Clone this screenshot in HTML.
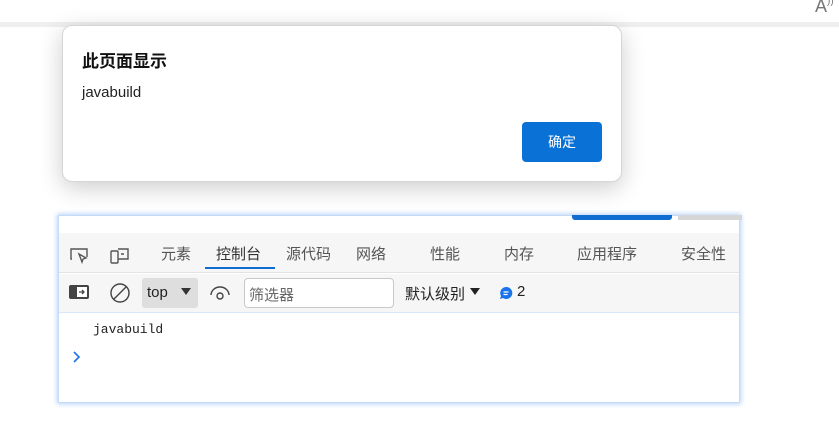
<!DOCTYPE html>
<html><head><meta charset="utf-8"><style>
*{margin:0;padding:0;box-sizing:border-box}
body{width:839px;height:440px;overflow:hidden;background:#fff;position:relative;font-family:"Liberation Sans","Noto Sans CJK SC",sans-serif}
.abs{position:absolute}
.tab{position:absolute;top:243px;font-size:15px;color:#555}
</style></head><body>
<div class="abs" style="left:0;top:22px;width:839px;height:5px;background:#efefef"></div>
<div class="abs" style="left:815px;top:-4px;font-size:18px;color:#777">A<span style="font-size:10px;vertical-align:top">))</span></div>

<!-- devtools -->
<div class="abs" style="left:58px;top:215px;width:682px;height:188px;background:#fff;box-shadow:0 0 5px 1px #b5d0f7;border:1px solid #c3daf8">
 <div class="abs" style="left:513px;top:-1px;width:100px;height:5px;background:#0f6cd0;border-radius:0 0 3px 3px"></div>
 <div class="abs" style="left:619px;top:-1px;width:64px;height:5px;background:#d6d6d6"></div>
 <div class="abs" style="left:0;top:17px;width:680px;height:40px;background:#f6f6f6;border-bottom:1px solid #e3e3e3"></div>
 <div class="abs" style="left:146px;top:51px;width:70px;height:2px;background:#0f6cd0"></div>
 <div class="abs" style="left:0;top:58px;width:680px;height:39px;background:#f6f6f6;border-bottom:1px solid #d8e6f8"></div>
 <div class="abs" style="left:83px;top:62px;width:56px;height:30px;background:#dedede;border-radius:3px"></div>
 <div class="abs" style="left:185px;top:62px;width:150px;height:30px;background:#fff;border:1px solid #c8c8c8;border-radius:4px"></div>
</div>
<!-- tab icons -->
<svg class="abs" style="left:68px;top:244px" width="24" height="22" fill="none" stroke="#555" stroke-width="1.4"><path d="M4 15H3V5h16v8"/><path d="M11 10l7 4-3 1-1 3z" fill="#fff"/></svg>
<svg class="abs" style="left:108px;top:244px" width="24" height="22" fill="none" stroke="#555" stroke-width="1.4"><rect x="3" y="7" width="7" height="12" rx="1"/><path d="M10 5h10v10h-10M13 10h3"/></svg>
<div class="tab" style="left:161px">元素</div>
<div class="tab" style="left:216px;color:#333">控制台</div>
<div class="tab" style="left:286px">源代码</div>
<div class="tab" style="left:356px">网络</div>
<div class="tab" style="left:430px">性能</div>
<div class="tab" style="left:504px">内存</div>
<div class="tab" style="left:577px">应用程序</div>
<div class="tab" style="left:681px">安全性</div>
<!-- toolbar -->
<svg class="abs" style="left:68px;top:283px" width="24" height="18"><rect x="1" y="2" width="20" height="14" rx="2" fill="#444"/><rect x="9" y="4" width="10" height="10" fill="#fff"/><path d="M11 9h5M14 7l2 2-2 2" stroke="#444" fill="none" stroke-width="1.3"/></svg>
<svg class="abs" style="left:108px;top:281px" width="24" height="24" fill="none" stroke="#444" stroke-width="1.4"><circle cx="12" cy="12" r="9"/><path d="M6 18L18 6"/></svg>
<div class="abs" style="left:147px;top:284px;font-size:15px;color:#222">top</div>
<div class="abs" style="left:181px;top:288px;width:0;height:0;border-left:5px solid transparent;border-right:5px solid transparent;border-top:7px solid #333"></div>
<svg class="abs" style="left:208px;top:283px" width="24" height="20" fill="none" stroke="#444" stroke-width="1.4"><path d="M3 12a9 8 0 0 1 18 0"/><circle cx="12" cy="13" r="3"/></svg>
<div class="abs" style="left:249px;top:284px;font-size:15px;color:#666">筛选器</div>
<div class="abs" style="left:405px;top:283px;font-size:15px;color:#222">默认级别</div>
<div class="abs" style="left:470px;top:288px;width:0;height:0;border-left:5px solid transparent;border-right:5px solid transparent;border-top:7px solid #222"></div>
<svg class="abs" style="left:499px;top:286px" width="14" height="14"><path d="M7 1a6 6 0 1 1-3 11l-3 1 1-3A6 6 0 0 1 7 1z" fill="#1a73e8"/><path d="M4.5 6h5M4.5 8.5h4" stroke="#fff" stroke-width="1.2"/></svg>
<div class="abs" style="left:517px;top:283px;font-size:15px;color:#222">2</div>
<div class="abs" style="left:93px;top:322px;font-family:'Liberation Mono',monospace;font-size:13px;color:#222">javabuild</div>
<svg class="abs" style="left:72px;top:350px" width="10" height="14" fill="none" stroke="#1a73e8" stroke-width="1.6"><path d="M2 2l5 5-5 5"/></svg>

<!-- dialog -->
<div class="abs" style="left:62px;top:25px;width:560px;height:157px;background:#fff;border-radius:10px;border:1px solid #d6d6d6;box-shadow:0 6px 24px rgba(0,0,0,.2)">
 <div class="abs" style="left:19px;top:21px;font-size:17px;font-weight:bold;color:#111">此页面显示</div>
 <div class="abs" style="left:19px;top:58px;font-size:15px;color:#222">javabuild</div>
 <div class="abs" style="left:459px;top:96px;width:80px;height:40px;background:#0a72d6;border-radius:4px;color:#fff;font-size:14px;line-height:40px;text-align:center">确定</div>
</div>
</body></html>
